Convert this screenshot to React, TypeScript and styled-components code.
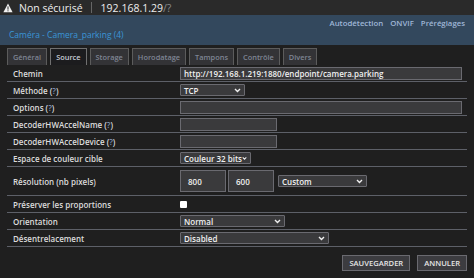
import * as React from "react";
import styled, { createGlobalStyle } from "styled-components";

const GlobalStyle = createGlobalStyle`
  html, body {
    margin: 0;
    padding: 0;
    background: #1e1e1e;
  }
  * {
    box-sizing: border-box;
  }
`;

const tabs = ["Général", "Source", "Storage", "Horodatage", "Tampons", "Contrôle", "Divers"];

const StyledApp = styled.div`
  width: 474px;
  height: 278px;
  overflow: hidden;
  background: #1f1f1f;
  font-family: "Open Sans", "Liberation Sans", sans-serif;
`;

const TopBar = styled.div`
  height: 15px;
  background: #2a2a2a;
  display: flex;
  align-items: center;
  padding-left: 3px;
  color: #eeeeee;
  font-size: 10.5px;
  font-family: "Open Sans", sans-serif;
`;

const Warn = styled.svg`
  width: 10px;
  height: 10px;
  margin-right: 6px;
`;

const UrlDivider = styled.span`
  width: 1px;
  height: 11px;
  background: #666;
  margin: 0 9px 0 8px;
`;

const Muted = styled.span`
  color: #8a8a8a;
`;

const Header = styled.div`
  height: 30px;
  background: #33485d;
  display: flex;
  flex-direction: column;
  padding: 2px 9px 0 9px;
`;

const Links = styled.div`
  display: flex;
  justify-content: flex-end;
  gap: 7px;
  font-size: 7.8px;
  font-weight: 600;
  color: #9fb6d6;
  height: 12px;
  line-height: 12px;
`;

const Title = styled.div`
  font-size: 8.5px;
  color: #3b95d6;
  line-height: 12px;
`;

const Body = styled.div`
  padding: 3px 7px 0 7px;
`;

const TabBar = styled.div`
  display: flex;
  gap: 3px;
  height: 17px;
`;

const Tab = styled.div<{ $active?: boolean }>`
  height: 17px;
  padding: 0 5px;
  display: flex;
  align-items: center;
  font-size: 7.4px;
  font-weight: 600;
  white-space: nowrap;
  color: ${(p) => (p.$active ? "#c8cdd8" : "#7f8594")};
  background: ${(p) => (p.$active ? "#1c1c1e" : "#333336")};
  border: 1px solid ${(p) => (p.$active ? "#707070" : "#5c5c5c")};
  border-bottom: none;
`;

const Row = styled.div<{ $tall?: boolean }>`
  display: grid;
  grid-template-columns: 173px 1fr;
  align-items: center;
  height: ${(p) => (p.$tall ? "29px" : "17px")};
  border-bottom: 1px solid #5d6068;
`;

const Label = styled.div`
  padding-left: 6px;
  font-size: 8px;
  font-weight: 600;
  color: #dcdcdc;
  white-space: nowrap;
`;

const Help = styled.span`
  color: #7e93b8;
`;

const Field = styled.div`
  display: flex;
  align-items: center;
  gap: 2px;
`;

const TextInput = styled.div<{ $w: number; $h?: number }>`
  width: ${(p) => p.$w}px;
  height: ${(p) => p.$h || 13}px;
  background: #3a3a3c;
  border: 1px solid #6a6a70;
  color: #f0f0f0;
  font-size: 8px;
  font-weight: 600;
  display: flex;
  align-items: center;
  padding-left: ${(p) => (p.$h ? 7 : 3)}px;
  white-space: nowrap;
  overflow: hidden;
`;

const Select = styled.div<{ $w: number; $gap?: number }>`
  width: ${(p) => p.$w}px;
  height: 12px;
  background: #3a3a3c;
  border: 1px solid #6a6a70;
  border-radius: 1px;
  color: #f0f0f0;
  font-size: 8px;
  font-weight: 600;
  white-space: nowrap;
  display: flex;
  align-items: center;
  justify-content: space-between;
  padding: 0 3px;
  margin-left: ${(p) => p.$gap || 0}px;
`;

const Check = styled.div`
  width: 7px;
  height: 7px;
  background: #ffffff;
  border-radius: 1px;
`;

const Actions = styled.div`
  display: flex;
  justify-content: flex-end;
  gap: 7px;
  margin-top: 8px;
`;

const Button = styled.div`
  height: 16px;
  padding: 0 6px;
  display: flex;
  align-items: center;
  background: #3c3c40;
  border: 1px solid #6a6a70;
  color: #e6e6e6;
  font-size: 7.6px;
  font-weight: 600;
`;

const Chevron = () => (
  <svg width="7" height="5" viewBox="0 0 7 5">
    <path d="M1 1l2.5 2.5L6 1" stroke="#f0f0f0" strokeWidth="1.4" fill="none" />
  </svg>
);

const Q = () => (
  <>
    {" ("}
    <Help>?</Help>
    {")"}
  </>
);

const App = () => {
  return (
    <StyledApp>
      <GlobalStyle />
      <TopBar>
        <Warn viewBox="0 0 10 10">
          <path d="M5 0.5L9.6 9.3H0.4z" fill="#f2f2f2" />
          <rect x="4.5" y="3.4" width="1" height="3.2" fill="#2a2a2a" />
          <rect x="4.5" y="7.3" width="1" height="1" fill="#2a2a2a" />
        </Warn>
        Non sécurisé
        <UrlDivider />
        192.168.1.29<Muted>/?</Muted>
      </TopBar>

      <Header>
        <Links>
          <span>Autodétection</span>
          <span>ONVIF</span>
          <span>Préréglages</span>
        </Links>
        <Title>Caméra - Camera_parking (4)</Title>
      </Header>

      <Body>
        <TabBar>
          {tabs.map((t) => (
            <Tab key={t} $active={t === "Source"}>
              {t}
            </Tab>
          ))}
        </TabBar>

        <Row>
          <Label>Chemin</Label>
          <Field>
            <TextInput $w={282}>http://192.168.1.219:1880/endpoint/camera.parking</TextInput>
          </Field>
        </Row>
        <Row>
          <Label>
            Méthode<Q />
          </Label>
          <Field>
            <Select $w={65}>
              TCP <Chevron />
            </Select>
          </Field>
        </Row>
        <Row>
          <Label>
            Options<Q />
          </Label>
          <Field>
            <TextInput $w={282} />
          </Field>
        </Row>
        <Row>
          <Label>
            DecoderHWAccelName<Q />
          </Label>
          <Field>
            <TextInput $w={97} />
          </Field>
        </Row>
        <Row>
          <Label>
            DecoderHWAccelDevice<Q />
          </Label>
          <Field>
            <TextInput $w={97} />
          </Field>
        </Row>
        <Row>
          <Label>Espace de couleur cible</Label>
          <Field>
            <Select $w={71}>
              Couleur 32 bits <Chevron />
            </Select>
          </Field>
        </Row>
        <Row $tall>
          <Label>Résolution (nb pixels)</Label>
          <Field>
            <TextInput $w={46} $h={22}>
              800
            </TextInput>
            <TextInput $w={46} $h={22}>
              600
            </TextInput>
            <Select $w={89} $gap={2}>
              Custom <Chevron />
            </Select>
          </Field>
        </Row>
        <Row>
          <Label>Préserver les proportions</Label>
          <Field>
            <Check />
          </Field>
        </Row>
        <Row>
          <Label>Orientation</Label>
          <Field>
            <Select $w={105}>
              Normal <Chevron />
            </Select>
          </Field>
        </Row>
        <Row>
          <Label>Désentrelacement</Label>
          <Field>
            <Select $w={149}>
              Disabled <Chevron />
            </Select>
          </Field>
        </Row>

        <Actions>
          <Button>SAUVEGARDER</Button>
          <Button>ANNULER</Button>
        </Actions>
      </Body>
    </StyledApp>
  );
};

export default App;
